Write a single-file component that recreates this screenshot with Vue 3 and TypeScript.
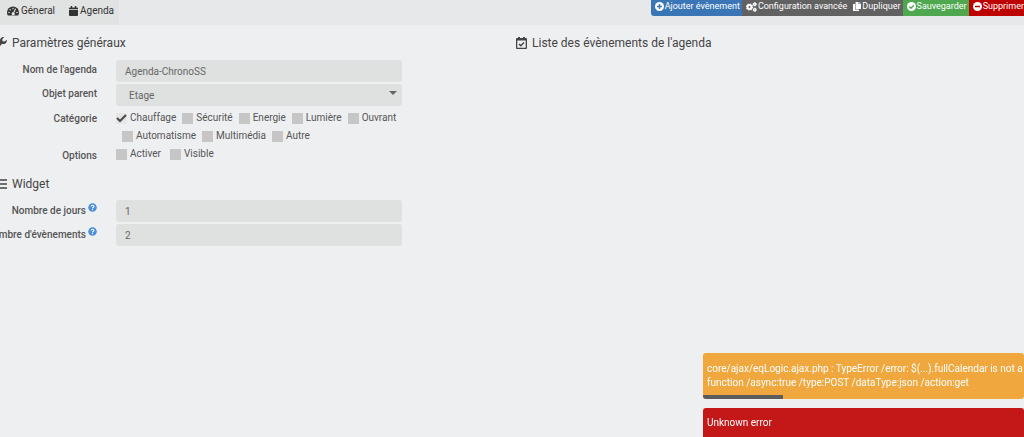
<script setup lang="ts">
import { ref } from 'vue'

interface Check {
  id: string
  label: string
  checked: boolean
}

const agendaName = ref('Agenda-ChronoSS')
const parentObject = ref('Etage')
const dayCount = ref('1')
const eventCount = ref('2')

const categories = ref<Check[]>([
  { id: 'heating', label: 'Chauffage', checked: true },
  { id: 'security', label: 'Sécurité', checked: false },
  { id: 'energy', label: 'Energie', checked: false },
  { id: 'light', label: 'Lumière', checked: false },
  { id: 'opening', label: 'Ouvrant', checked: false },
  { id: 'automatism', label: 'Automatisme', checked: false },
  { id: 'multimedia', label: 'Multimédia', checked: false },
  { id: 'default', label: 'Autre', checked: false },
])

const options = ref<Check[]>([
  { id: 'enable', label: 'Activer', checked: false },
  { id: 'visible', label: 'Visible', checked: false },
])

const progress = 25
</script>

<template>
  <div class="page">
    <header class="topbar">
      <nav class="tabs">
        <a class="tab" href="#general">
          <svg class="ico" width="12" height="10" viewBox="0 0 24 20">
            <path fill="currentColor" d="M12 1A12 12 0 0 0 0 13c0 2.200.6 4.200 1.600 6h20.800c1-1.800 1.600-3.800 1.600-6A12 12 0 0 0 12 1z" />
            <g fill="#e1e2e2">
              <circle cx="4" cy="13" r="1.500" /><circle cx="6.300" cy="7.500" r="1.500" /><circle cx="12" cy="5" r="1.500" /><circle cx="20" cy="13" r="1.500" />
              <path d="M16.300 5.200l1.900.8-3.700 7.500a3 3 0 1 1-2-.9z" />
            </g>
          </svg>
          <span>Géneral</span>
        </a>
        <a class="tab active" href="#agenda">
          <svg class="ico" width="9" height="10" viewBox="0 0 20 22">
            <path fill="currentColor" d="M4 0h3v3h6V0h3v3h2a2 2 0 0 1 2 2v2H0V5a2 2 0 0 1 2-2h2zM0 8.500h20V20a2 2 0 0 1-2 2H2a2 2 0 0 1-2-2z" />
          </svg>
          <span>Agenda</span>
        </a>
      </nav>
      <div class="actions">
        <button type="button" class="btn blue">
          <svg class="ico" width="9" height="9" viewBox="0 0 18 18">
            <circle cx="9" cy="9" r="9" fill="#fff" /><path d="M9 4v10M4 9h10" stroke="#3a76b6" stroke-width="2.800" />
          </svg>
          <span>Ajouter évènement</span>
        </button>
        <button type="button" class="btn gray">
          <svg class="ico" width="11" height="10" viewBox="0 0 22 20">
            <g fill="none" stroke="#fff">
              <circle cx="7" cy="10" r="4" stroke-width="4" />
              <circle cx="7" cy="10" r="6" stroke-width="2.400" stroke-dasharray="2.400 2.310" />
              <circle cx="17.500" cy="4.500" r="2.200" stroke-width="2.600" />
              <circle cx="17.500" cy="4.500" r="3.500" stroke-width="1.600" stroke-dasharray="1.600 1.150" />
              <circle cx="17.500" cy="15.500" r="2.200" stroke-width="2.600" />
              <circle cx="17.500" cy="15.500" r="3.500" stroke-width="1.600" stroke-dasharray="1.600 1.150" />
            </g>
          </svg>
          <span>Configuration avancée</span>
        </button>
        <button type="button" class="btn gray">
          <svg class="ico" width="8" height="9" viewBox="0 0 16 18">
            <path fill="#fff" d="M6 0h5v4h5v9a1 1 0 0 1-1 1H6a1 1 0 0 1-1-1V1a1 1 0 0 1 1-1zM12 0l4 3.200h-4zM1 4h3v11h8v2a1 1 0 0 1-1 1H1a1 1 0 0 1-1-1V5a1 1 0 0 1 1-1z" />
          </svg>
          <span>Dupliquer</span>
        </button>
        <button type="button" class="btn green">
          <svg class="ico" width="9" height="9" viewBox="0 0 18 18">
            <circle cx="9" cy="9" r="9" fill="#fff" /><path d="M4.500 9.200l3.200 3.200 5.800-6" fill="none" stroke="#4fa84f" stroke-width="2.600" />
          </svg>
          <span>Sauvegarder</span>
        </button>
        <button type="button" class="btn red">
          <svg class="ico" width="9" height="9" viewBox="0 0 18 18">
            <circle cx="9" cy="9" r="9" fill="#fff" /><path d="M4 9h10" stroke="#bd0000" stroke-width="3" />
          </svg>
          <span>Supprimer</span>
        </button>
      </div>
    </header>

    <main class="content">
      <form class="settings" @submit.prevent>
        <h2 class="legend cut">
          <svg class="ico" width="12" height="12" viewBox="0 0 24 24">
            <path fill="currentColor" d="M23.500 5.600a7 7 0 0 1-9.200 8.100L5.400 22.600a3 3 0 0 1-4.200-4.200l9-9A7 7 0 0 1 18.400.4l-3.900 3.900.6 4.200 4.200.6z" />
          </svg>
          <span>Paramètres généraux</span>
        </h2>
        <div class="row">
          <label class="name" for="name">Nom de l'agenda</label>
          <input id="name" v-model="agendaName" class="field" type="text">
        </div>
        <div class="row">
          <label class="name" for="parent">Objet parent</label>
          <div class="select">
            <select id="parent" v-model="parentObject" class="field">
              <option>Etage</option>
            </select>
            <svg class="caret" width="8" height="4" viewBox="0 0 8 4"><path fill="#666" d="M0 0h8L4 4z" /></svg>
          </div>
        </div>
        <div class="row group" role="group" aria-labelledby="cat-label">
          <span id="cat-label" class="name">Catégorie</span>
          <div class="checks">
            <label v-for="c in categories" :key="c.id" class="check">
              <span class="box">
                <input v-model="c.checked" type="checkbox">
                <svg v-if="c.checked" width="11" height="11" viewBox="0 0 11 11"><path d="M1 5l3 3L10 2" fill="none" stroke="#4d4d4d" stroke-width="2.200" /></svg>
              </span>
              <span>{{ c.label }}</span>
            </label>
          </div>
        </div>
        <div class="row group" role="group" aria-labelledby="opt-label">
          <span id="opt-label" class="name">Options</span>
          <div class="checks wide">
            <label v-for="o in options" :key="o.id" class="check">
              <span class="box">
                <input v-model="o.checked" type="checkbox">
                <svg v-if="o.checked" width="11" height="11" viewBox="0 0 11 11"><path d="M1 5l3 3L10 2" fill="none" stroke="#4d4d4d" stroke-width="2.200" /></svg>
              </span>
              <span>{{ o.label }}</span>
            </label>
          </div>
        </div>

        <h2 class="legend cut second">
          <svg class="ico" width="12" height="12" viewBox="0 0 12 12">
            <path d="M1 2h11M1 6h11M1 10h11" stroke="currentColor" stroke-width="1.600" />
          </svg>
          <span>Widget</span>
        </h2>
        <div class="row">
          <label class="name" for="days">Nombre de jours<svg class="help" width="9" height="9" viewBox="0 0 18 18"><circle cx="9" cy="9" r="8.500" fill="#4a90dc" /><path d="M6.200 7.200C6.200 3.800 11.800 3.800 11.800 7c0 1.900-2.800 1.900-2.800 3.900M9 12.400v2.200" fill="none" stroke="#fff" stroke-width="2.200" /></svg></label>
          <input id="days" v-model="dayCount" class="field" type="text">
        </div>
        <div class="row">
          <label class="name" for="events">Nombre d'évènements<svg class="help" width="9" height="9" viewBox="0 0 18 18"><circle cx="9" cy="9" r="8.500" fill="#4a90dc" /><path d="M6.200 7.200C6.200 3.800 11.800 3.800 11.800 7c0 1.900-2.800 1.900-2.800 3.900M9 12.400v2.200" fill="none" stroke="#fff" stroke-width="2.200" /></svg></label>
          <input id="events" v-model="eventCount" class="field" type="text">
        </div>
      </form>

      <section class="events">
        <h2 class="legend">
          <svg class="ico" width="11" height="12" viewBox="0 0 11 12">
            <path fill="currentColor" fill-rule="evenodd" d="M2 0h2v1h3V0h2v1h1a1 1 0 0 1 1 1v9a1 1 0 0 1-1 1H1a1 1 0 0 1-1-1V2a1 1 0 0 1 1-1h1zM1.300 3.500v7.200h8.400V3.500z" />
            <path d="M3 7l1.800 1.800L8 5.500" fill="none" stroke="currentColor" stroke-width="1.400" />
          </svg>
          <span>Liste des évènements de l'agenda</span>
        </h2>
      </section>
    </main>

    <aside class="toasts" aria-live="polite">
      <div class="toast warning">
        core/ajax/eqLogic.ajax.php : TypeError /error: $(...).fullCalendar is not a function /async:true /type:POST /dataType:json /action:get
        <div class="progress" :style="{ width: progress + '%' }"></div>
      </div>
      <div class="toast danger">Unknown error</div>
    </aside>
  </div>
</template>

<style>
body {
  background: #eeeff1;
}
</style>

<style scoped>
.page {
  min-height: 100vh;
  overflow: hidden;
  font: 10px/14px Roboto, "Liberation Sans", sans-serif;
  color: #555;
}
.page * {
  box-sizing: border-box;
}
.ico {
  flex: none;
}
.topbar {
  display: flex;
  justify-content: space-between;
  align-items: flex-start;
  height: 25px;
  background: #e7e8e9;
}
.tabs {
  display: flex;
  height: 100%;
}
.tab {
  display: flex;
  align-items: center;
  gap: 2px;
  padding: 0 7px 3px;
  color: #333;
  text-decoration: none;
  background: #e1e2e2;
}
.tab.active {
  padding-right: 5px;
}
.actions {
  display: flex;
  border-bottom-left-radius: 3px;
  overflow: hidden;
}
.btn {
  display: flex;
  align-items: center;
  gap: 1px;
  height: 16px;
  padding: 0 2px 3px 4px;
  border: 0;
  font: 400 9px/13px Roboto, "Liberation Sans", sans-serif;
  color: #fff;
  white-space: nowrap;
}
.blue {
  background: #3a76b6;
}
.gray {
  background: #616161;
}
.green {
  background: #4fa84f;
}
.red {
  background: #bd0000;
  padding-right: 0;
}
.content {
  display: grid;
  grid-template-columns: 1fr 1fr;
  padding-top: 10px;
}
.legend {
  display: flex;
  align-items: center;
  gap: 5px;
  height: 16px;
  margin: 0 0 9px;
  font-size: 12px;
  font-weight: 400;
  color: #444;
}
.legend.cut {
  margin-left: -5px;
}
.legend.second {
  margin-top: 13px;
  margin-bottom: 8px;
}
.events {
  padding-left: 4px;
}
.row {
  display: grid;
  grid-template-columns: 97px 1fr;
  column-gap: 19px;
  margin-bottom: 2px;
  padding-right: 110px;
}
.name {
  justify-self: end;
  padding-top: 3px;
  font-weight: 500;
  white-space: nowrap;
}
.group .name {
  padding-top: 4px;
}
.help {
  margin-left: 2px;
  vertical-align: 2px;
}
.field {
  display: block;
  width: 100%;
  height: 22px;
  padding: 1px 9px 0;
  border: 0;
  border-radius: 3px;
  outline: 0;
  appearance: none;
  font: 10px/20px Roboto, "Liberation Sans", sans-serif;
  color: #666;
  background: #dfe1e0;
}
.select {
  position: relative;
}
.select .field {
  padding-left: 13px;
}
.caret {
  position: absolute;
  top: 7px;
  right: 5px;
}
.checks {
  display: flex;
  flex-wrap: wrap;
  row-gap: 4px;
  padding-top: 3px;
}
.checks.wide {
  padding-top: 2px;
}
.check {
  display: flex;
  align-items: center;
  gap: 3px;
  height: 14px;
  margin-left: 6px;
}
.check:first-child {
  margin-left: 0;
}
.wide .check + .check {
  margin-left: 9px;
}
.box {
  display: grid;
}
.box > * {
  grid-area: 1 / 1;
}
.box input {
  width: 11px;
  height: 11px;
  margin: 0;
  appearance: none;
  background: #c6c6c6;
}
.box input:checked {
  background: #e6e6e7;
}
.box svg {
  pointer-events: none;
}
.toasts {
  position: fixed;
  right: 0;
  bottom: 0;
  display: grid;
  gap: 9px;
  width: 321px;
  color: #fff;
}
.toast {
  position: relative;
  padding: 9px 0 9px 4px;
  border-radius: 3px;
  overflow: hidden;
}
.warning {
  background: #f0a73d;
}
.danger {
  padding: 8px 4px 7px;
  border-radius: 3px 3px 0 0;
  background: #c31718;
}
.progress {
  position: absolute;
  left: 0;
  bottom: 0;
  height: 4px;
  background: #5c5c5c;
}
</style>
